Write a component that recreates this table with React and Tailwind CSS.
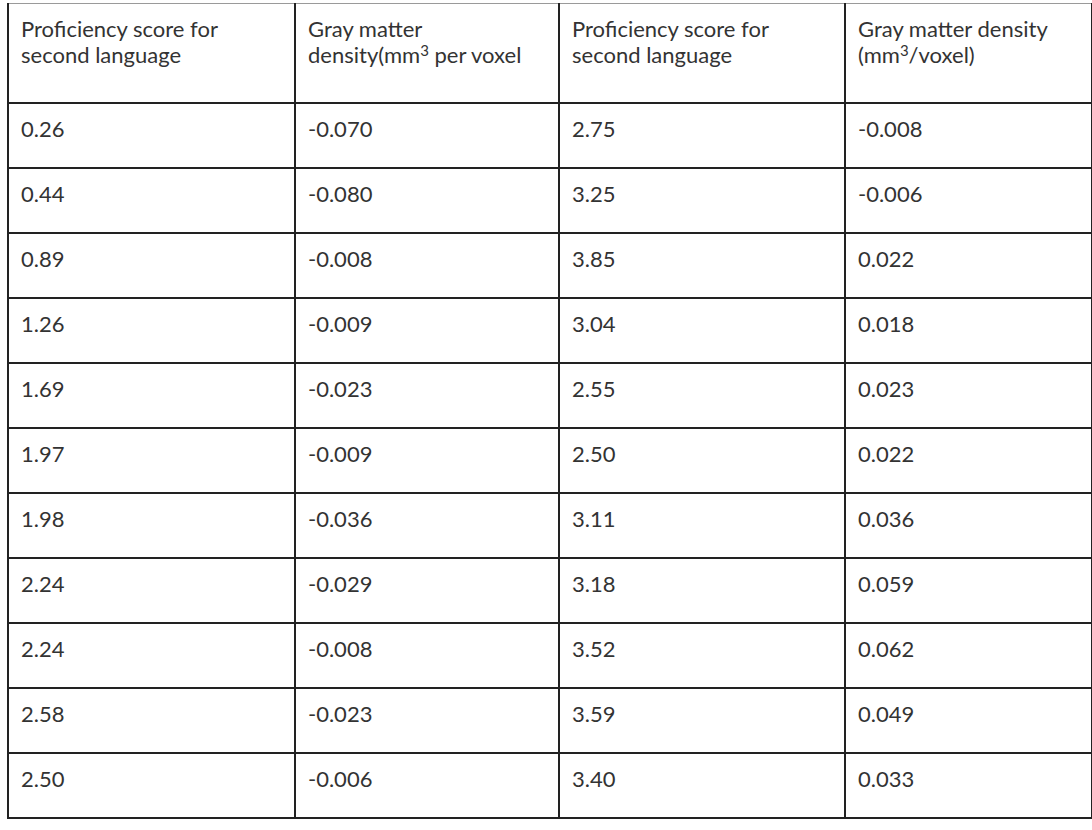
const rows = [
  ["0.26", "-0.070", "2.75", "-0.008"],
  ["0.44", "-0.080", "3.25", "-0.006"],
  ["0.89", "-0.008", "3.85", "0.022"],
  ["1.26", "-0.009", "3.04", "0.018"],
  ["1.69", "-0.023", "2.55", "0.023"],
  ["1.97", "-0.009", "2.50", "0.022"],
  ["1.98", "-0.036", "3.11", "0.036"],
  ["2.24", "-0.029", "3.18", "0.059"],
  ["2.24", "-0.008", "3.52", "0.062"],
  ["2.58", "-0.023", "3.59", "0.049"],
  ["2.50", "-0.006", "3.40", "0.033"],
];

const cell = "border-2 border-[#222] align-top pl-[12px] pr-[24px] pt-[12px]";
const head = cell + " border-t border-t-[#9a9a9a]";

export default function App() {
  return (
    <div className="bg-white w-[1092px] h-[830px] pt-[3px] pl-[7px]" style={{ fontFamily: "Lato, 'Noto Sans', sans-serif" }}>
      <table className="border-collapse text-[22px] leading-[26px] text-[#333] table-fixed w-[1084px]">
        <colgroup>
          <col className="w-[287px]" />
          <col className="w-[264px]" />
          <col className="w-[286px]" />
          <col className="w-[247px]" />
        </colgroup>
        <thead>
          <tr className="h-[99px]">
            <td className={head}>Proficiency score for second language</td>
            <td className={head}>
              Gray matter density(mm<sup className="text-[15px]">3</sup> per voxel
            </td>
            <td className={head}>Proficiency score for second language</td>
            <td className={head}>
              Gray matter density (mm<sup className="text-[15px]">3</sup>/voxel)
            </td>
          </tr>
        </thead>
        <tbody>
          {rows.map((r, i) => (
            <tr key={i} className="h-[65px]">
              {r.map((v, j) => (
                <td key={j} className={cell}>{v}</td>
              ))}
            </tr>
          ))}
        </tbody>
      </table>
    </div>
  );
}
